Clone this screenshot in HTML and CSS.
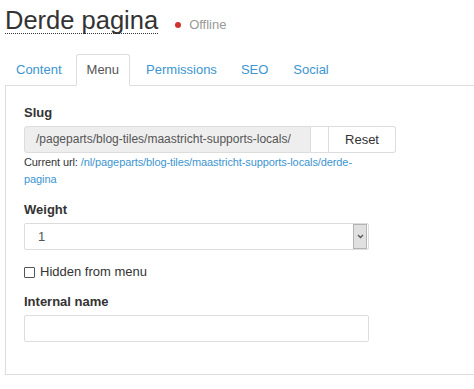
FILE: index.html
```html
<!DOCTYPE html>
<html lang="nl">
<head>
<meta charset="utf-8">
<title>Derde pagina</title>
<link rel="stylesheet" href="styles.css">
</head>
<body>
<div class="page">
  <header class="page-header">
    <h1 class="title">Derde pagina</h1>
    <span class="status"><span class="dot"></span>Offline</span>
  </header>

  <ul class="tabs">
    <li><a class="tab">Content</a></li>
    <li><a class="tab active">Menu</a></li>
    <li><a class="tab">Permissions</a></li>
    <li><a class="tab">SEO</a></li>
    <li><a class="tab">Social</a></li>
  </ul>

  <div class="panel">
    <div class="form">
      <div class="form-group">
        <label class="label">Slug</label>
        <div class="input-group">
          <div class="slug-input">/pageparts/blog-tiles/maastricht-supports-locals/</div>
          <div class="addon"></div>
          <button class="btn-reset">Reset</button>
        </div>
        <p class="help">Current url: <a class="link">/nl/pageparts/blog-tiles/maastricht-supports-locals/derde-pagina</a></p>
      </div>

      <div class="form-group">
        <label class="label">Weight</label>
        <div class="select">
          <span class="select-value">1</span>
          <span class="select-arrow">
            <svg width="7" height="5" viewBox="0 0 7 5"><path d="M1 1 L3.5 3.5 L6 1" fill="none" stroke="#555" stroke-width="1.3"/></svg>
          </span>
        </div>
      </div>

      <div class="form-group">
        <label class="check"><span class="checkbox"></span>Hidden from menu</label>
      </div>

      <div class="form-group">
        <label class="label">Internal name</label>
        <div class="text-input"></div>
      </div>
    </div>
  </div>
</div>
</body>
</html>
```

FILE: styles.css
```css
html, body {
  margin: 0;
  padding: 0;
  overflow: hidden;
  background: #fff;
}

body {
  font-family: "Liberation Sans", Arial, sans-serif;
  font-size: 13px;
  color: #333;
}

.page {
  width: 480px;
  padding-left: 5px;
}

.page-header {
  display: flex;
  align-items: baseline;
  margin-top: 7px;
}

.title {
  margin: 0;
  font-size: 25.5px;
  font-weight: normal;
  line-height: 26px;
  color: #333;
  border-bottom: 1px dotted #333;
}

.status {
  margin-left: 17px;
  font-size: 13px;
  color: #999;
}

.dot {
  display: inline-block;
  width: 6px;
  height: 6px;
  border-radius: 50%;
  background: #d2322d;
  margin-right: 8px;
  vertical-align: 1px;
}

.tabs {
  display: flex;
  list-style: none;
  margin: 20px 0 0;
  padding: 0;
  border-bottom: 1px solid #ddd;
}

.tabs li {
  margin-right: 3px;
  margin-bottom: -1px;
}

.tab {
  display: block;
  padding: 6px 10px;
  line-height: 18px;
  border: 1px solid transparent;
  border-radius: 3px 3px 0 0;
  color: #3c95d1;
  font-size: 13px;
}

.tabs li:nth-child(3) .tab {
  padding-left: 12px;
  padding-right: 9px;
}

.tab.active {
  color: #555;
  background: #fff;
  border-color: #ddd #ddd transparent;
}

.panel {
  border: 1px solid #ddd;
  border-top: none;
  box-shadow: 0 1px 1px rgba(0, 0, 0, 0.05);
  padding: 18px 18px 19px;
}

.form {
  width: 345px;
}

.form-group {
  margin-bottom: 13px;
}

.form-group:nth-child(3) {
  margin-bottom: 12px;
}

.label {
  display: block;
  font-weight: bold;
  line-height: 18px;
  margin-bottom: 4px;
  color: #333;
}

.input-group {
  display: flex;
  width: 372px;
  height: 27px;
}

.slug-input {
  flex: 1;
  box-sizing: border-box;
  background: #eee;
  border: 1px solid #ddd;
  border-radius: 3px 0 0 3px;
  padding: 0 11px;
  font-size: 12px;
  line-height: 25px;
  color: #555;
  white-space: nowrap;
  overflow: hidden;
}

.addon {
  box-sizing: border-box;
  width: 18px;
  background: #fff;
  border: 1px solid #ddd;
  border-left: none;
}

.btn-reset {
  box-sizing: border-box;
  width: 67px;
  height: 27px;
  background: #fff;
  border: 1px solid #ddd;
  border-left: none;
  border-radius: 0 3px 3px 0;
  font-family: inherit;
  font-size: 13px;
  color: #333;
  padding: 0;
}

.help {
  margin: 1px 0 0;
  font-size: 11px;
  line-height: 17px;
  letter-spacing: -0.1px;
  color: #333;
}

.link {
  color: #3c95d1;
}

.select {
  box-sizing: border-box;
  display: flex;
  align-items: stretch;
  justify-content: space-between;
  width: 345px;
  height: 27px;
  border: 1px solid #ddd;
  border-radius: 2px;
  background: #fff;
}

.select-value {
  padding-left: 13px;
  line-height: 25px;
  color: #555;
}

.select-arrow {
  box-sizing: border-box;
  display: flex;
  align-items: center;
  justify-content: center;
  width: 14px;
  margin-right: 1px;
  background: #e0e0e0;
  border: 1px solid #b4b4b4;
}

.check {
  display: flex;
  align-items: center;
  height: 18px;
  line-height: 18px;
  color: #333;
}

.checkbox {
  box-sizing: border-box;
  width: 11px;
  height: 11px;
  border: 1px solid #555;
  border-radius: 1px;
  margin-right: 5px;
  background: #fff;
}

.text-input {
  box-sizing: border-box;
  width: 345px;
  height: 27px;
  border: 1px solid #ddd;
  border-radius: 2px;
}
```
